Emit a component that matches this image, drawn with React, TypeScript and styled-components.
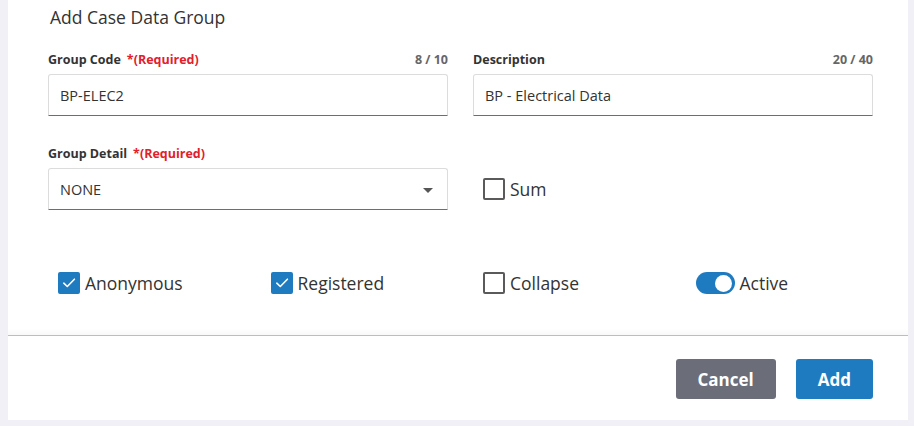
import React, {useState} from 'react';
import styled, {createGlobalStyle} from 'styled-components';

////// Global //////
const GlobalStyle = createGlobalStyle`
  html, body {
    margin: 0;
    padding: 0;
    background: #f0f0f6;
    font-family: "Open Sans", "Liberation Sans", sans-serif;
    color: #333;
  }
  * { box-sizing: border-box; }
`;

////// Small parts //////
const CheckIcon = () => (
  <svg width="16" height="16" viewBox="0 0 16 16" fill="none">
    <path d="M2.8 8.2 L6.3 11.5 L13.4 4.2" stroke="#fff" strokeWidth="1.6" strokeLinecap="round" strokeLinejoin="round"/>
  </svg>
);

const CheckOption = ({label, checked, onToggle}: {label: string, checked: boolean, onToggle: () => void}) => (
  <OptionLabel onClick={onToggle}>
    <Box $checked={checked}>{checked && <CheckIcon/>}</Box>
    <span>{label}</span>
  </OptionLabel>
);

const Field = ({label, required, counter, children}: {label: string, required?: boolean, counter?: string, children: React.ReactNode}) => (
  <FieldBlock>
    <LabelRow>
      <FieldLabel>
        {label}
        {required && <Required>*(Required)</Required>}
      </FieldLabel>
      {counter && <Counter>{counter}</Counter>}
    </LabelRow>
    {children}
  </FieldBlock>
);

////// Component //////
export default function App() {
  const [flags, setFlags] = useState({
    sum: false, anonymous: true, registered: true, collapse: false, active: true
  });
  const flip = (key: keyof typeof flags) => setFlags(f => ({...f, [key]: !f[key]}));

  return (
    <Page>
      <GlobalStyle/>
      <Panel>
        <FormArea>
          <Title>Add Case Data Group</Title>

          <TwoColumns>
            <Field label="Group Code" required counter="8 / 10">
              <InputBox>BP-ELEC2</InputBox>
            </Field>
            <Field label="Description" counter="20 / 40">
              <InputBox>BP - Electrical Data</InputBox>
            </Field>

            <Field label="Group Detail" required>
              <InputBox>
                NONE
                <Caret/>
              </InputBox>
            </Field>
            <SideCell>
              <CheckOption label="Sum" checked={flags.sum} onToggle={() => flip('sum')}/>
            </SideCell>
          </TwoColumns>

          <OptionsRow>
            <OptionCell>
              <CheckOption label="Anonymous" checked={flags.anonymous} onToggle={() => flip('anonymous')}/>
            </OptionCell>
            <OptionCell>
              <CheckOption label="Registered" checked={flags.registered} onToggle={() => flip('registered')}/>
            </OptionCell>
            <OptionCell>
              <CheckOption label="Collapse" checked={flags.collapse} onToggle={() => flip('collapse')}/>
            </OptionCell>
            <OptionCell>
              <OptionLabel onClick={() => flip('active')}>
                <Track $on={flags.active}><Knob $on={flags.active}/></Track>
                <span>Active</span>
              </OptionLabel>
            </OptionCell>
          </OptionsRow>
        </FormArea>

        <Footer>
          <Button $variant="secondary">Cancel</Button>
          <Button $variant="primary">Add</Button>
        </Footer>
      </Panel>
    </Page>
  );
}

////// Styles //////
const Page = styled.div`
  padding: 0 6px 6px 8px;
  min-height: 426px;
`;

const Panel = styled.div`
  background: #fff;
  width: 900px;
  height: 420px;
  display: flex;
  flex-direction: column;
`;

const FormArea = styled.div`
  padding: 5px 35px 0 40px;
  height: 335px;
  box-shadow: inset 0 -7px 6px -5px rgba(0, 0, 0, 0.04);
`;

const Title = styled.h2`
  margin: 0 0 0 2px;
  font-size: 17.5px;
  font-weight: 400;
  line-height: 24px;
  color: #333;
`;

const TwoColumns = styled.div`
  display: grid;
  grid-template-columns: 1fr 1fr;
  column-gap: 25px;
  row-gap: 28px;
  margin-top: 21px;
`;

const FieldBlock = styled.div`
  display: flex;
  flex-direction: column;
`;

const LabelRow = styled.div`
  display: flex;
  justify-content: space-between;
  align-items: center;
  height: 18px;
  margin-bottom: 6px;
`;

const FieldLabel = styled.label`
  font-size: 12.5px;
  font-weight: 700;
  color: #333;
`;

const Required = styled.span`
  color: #e2202c;
  margin-left: 6px;
`;

const Counter = styled.span`
  font-size: 12.5px;
  font-weight: 700;
  color: #666;
`;

const InputBox = styled.div`
  position: relative;
  height: 42px;
  display: flex;
  align-items: center;
  padding: 0 11px;
  font-size: 14.5px;
  color: #333;
  border: 1px solid #dcdcdc;
  border-bottom: 1px solid #6e6e6e;
  border-radius: 3px 3px 0 0;
`;

const Caret = styled.span`
  position: absolute;
  right: 14px;
  top: 19px;
  width: 0;
  height: 0;
  border-left: 5px solid transparent;
  border-right: 5px solid transparent;
  border-top: 5px solid #555;
`;

const SideCell = styled.div`
  padding: 24px 0 0 10px;
  height: 66px;
  display: flex;
  align-items: center;
`;

const OptionsRow = styled.div`
  display: grid;
  grid-template-columns: repeat(4, 1fr);
  column-gap: 25px;
  margin-top: 62px;
`;

const OptionCell = styled.div`
  padding-left: 10px;
`;

const OptionLabel = styled.div`
  display: inline-flex;
  align-items: center;
  gap: 5px;
  font-size: 17.5px;
  line-height: 22px;
  color: #333;
  cursor: pointer;
`;

const Box = styled.span<{$checked: boolean}>`
  width: 22px;
  height: 22px;
  border-radius: 2px;
  display: inline-flex;
  align-items: center;
  justify-content: center;
  background: ${p => p.$checked ? '#1f7bc0' : '#fff'};
  border: 2px solid ${p => p.$checked ? '#1f7bc0' : '#5a5a5a'};
`;

const Track = styled.span<{$on: boolean}>`
  width: 39px;
  height: 22px;
  border-radius: 11px;
  background: ${p => p.$on ? '#1f7bc0' : '#999'};
  display: inline-flex;
  align-items: center;
  justify-content: ${p => p.$on ? 'flex-end' : 'flex-start'};
  padding: 0 3px;
`;

const Knob = styled.span<{$on: boolean}>`
  width: 17px;
  height: 17px;
  border-radius: 50%;
  background: #fff;
`;

const Footer = styled.div`
  border-top: 1px solid #bcbcc4;
  display: flex;
  justify-content: flex-end;
  gap: 20px;
  padding: 23px 35px 0 0;
`;

const Button = styled.button<{$variant: 'primary' | 'secondary'}>`
  height: 40px;
  padding: 0 22px;
  border: none;
  border-radius: 3px;
  font-family: "Open Sans", "Liberation Sans", sans-serif;
  font-size: 17px;
  font-weight: 700;
  color: #fff;
  background: ${p => p.$variant === 'primary' ? '#1f7bc0' : '#6b6e78'};
  cursor: pointer;
`;
